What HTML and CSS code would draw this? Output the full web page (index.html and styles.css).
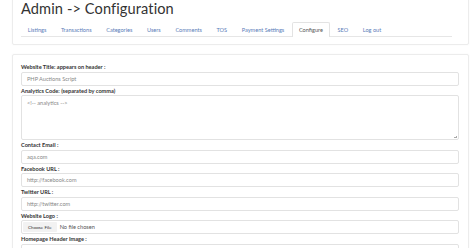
FILE: index.html
```html
<!DOCTYPE html>
<html>
<head>
<meta charset="utf-8">
<link rel="stylesheet" href="styles.css">
</head>
<body>
<div class="page">
  <div class="card head-card">
    <h1 class="title">Admin -&gt; Configuration</h1>
    <ul class="tabs">
      <li class="tab"><a>Listings</a></li>
      <li class="tab"><a>Transactions</a></li>
      <li class="tab"><a>Categories</a></li>
      <li class="tab"><a>Users</a></li>
      <li class="tab"><a>Comments</a></li>
      <li class="tab"><a>TOS</a></li>
      <li class="tab"><a>Payment Settings</a></li>
      <li class="tab active"><a>Configure</a></li>
      <li class="tab"><a>SEO</a></li>
      <li class="tab"><a>Log out</a></li>
    </ul>
  </div>
  <div class="card form-card">
    <label class="lbl">Website Title: appears on header :</label>
    <div class="field">PHP Auctions Script</div>
    <label class="lbl">Analytics Code: (separated by comma)</label>
    <div class="field area">&lt;!-- analytics --&gt;<span class="grip"></span></div>
    <label class="lbl">Contact Email :</label>
    <div class="field">aqa.com</div>
    <label class="lbl">Facebook URL :</label>
    <div class="field">http://facebook.com</div>
    <label class="lbl">Twitter URL :</label>
    <div class="field">http://twitter.com</div>
    <label class="lbl">Website Logo :</label>
    <div class="field file"><span class="btn">Choose File</span><span class="nofile">No file chosen</span></div>
    <label class="lbl">Homepage Header Image :</label>
    <div class="field"></div>
  </div>
</div>
</body>
</html>
```
FILE: styles.css
```css
html, body { margin: 0; padding: 0; background: #fff; }
body { font-family: "Lato", "Open Sans", sans-serif; color: #333; overflow: hidden; height: 248px; }
.page { padding: 0 5px 0 12px; margin-top: -12px; display: flex; flex-direction: column; gap: 9px; }
.card { border: 1px solid #ececec; border-radius: 2px; box-shadow: 0 0 2px rgba(0,0,0,0.04); background: #fff; }
.head-card { padding: 0 8px 7px 8px; }
.title { margin: 0; padding-top: 11px; font-weight: 400; font-size: 14.6px; line-height: 17px; color: #333; letter-spacing: 0.1px; }
.tabs { list-style: none; margin: 5px 8px 0 0; padding: 0; display: flex; border-bottom: 1px solid #e6e6e6; height: 14px; }
.tab { padding: 0 5.8px; margin-right: 1px; font-size: 5.6px; line-height: 13px; color: #5a7cb8; border: 1px solid transparent; border-bottom: none; }
.tab.active { color: #555; border-color: #e3e3e3; background: #fff; height: 14px; border-radius: 2px 2px 0 0; }
.form-card { padding: 7px 9px 10px 8px; display: flex; flex-direction: column; }
.lbl { font-size: 5.6px; font-weight: 700; color: #333; line-height: 7px; padding: 1px 0 1.5px; }
.field { height: 12px; border: 1px solid #e2e2e2; border-radius: 2px; font-size: 5.6px; color: #888; padding: 0 5px; line-height: 12px; position: relative; flex: none; }
.field.area { line-height: 8px; padding-top: 3px; height: 40px; }
.grip { position: absolute; right: 1px; bottom: 1px; width: 3px; height: 3px; background: linear-gradient(135deg, transparent 50%, #aaa 50%); }
.field.file { display: flex; align-items: center; gap: 3px; padding-left: 1px; color: #555; }
.btn { background: #f2f2f2; font-size: 4.6px; color: #333; padding: 0 5px; line-height: 10px; border-radius: 1px; }
.nofile { font-size: 5.6px; color: #555; }
```
